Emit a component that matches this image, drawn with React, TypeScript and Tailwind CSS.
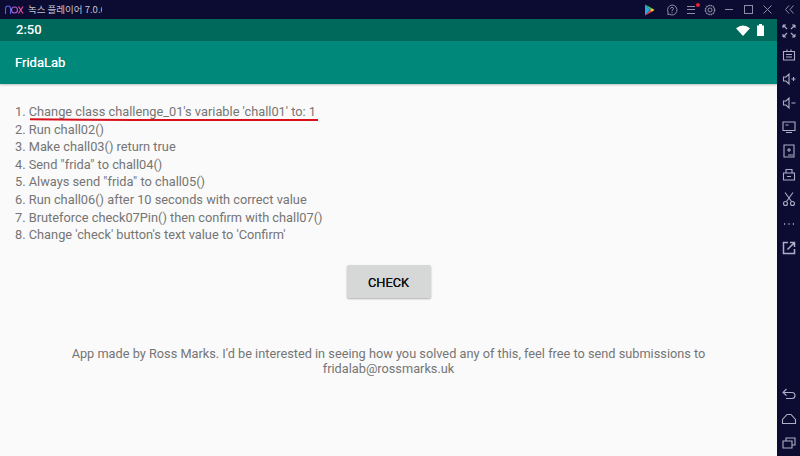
import React from "react";

const Side = ({ children, className = "" }: { children: React.ReactNode; className?: string }) => (
  <svg width="16" height="16" viewBox="0 0 16 16" fill="none" stroke="#adaec6" strokeWidth="1.1" className={className}>
    {children}
  </svg>
);

const lines = [
  "1. Change class challenge_01's variable 'chall01' to: 1",
  "2. Run chall02()",
  "3. Make chall03() return true",
  '4. Send "frida" to chall04()',
  '5. Always send "frida" to chall05()',
  "6. Run chall06() after 10 seconds with correct value",
  "7. Bruteforce check07Pin() then confirm with chall07()",
  "8. Change 'check' button's text value to 'Confirm'",
];

export default function App() {
  return (
    <div className="flex flex-col w-[800px] h-[456px] overflow-hidden bg-[#0c0b31] font-['Roboto',sans-serif]">
      {/* title bar */}
      <div className="flex items-center h-[19px] shrink-0 pl-[5px] bg-[#0c0b31]">
        <svg width="19" height="10" viewBox="0 0 19 10" fill="none" strokeWidth="1.1" className="mr-[4px]">
          <path d="M0.5 9V3.5Q0.5 1 3 1Q5.5 1 5.5 3.5V9" stroke="#5a63e6" />
          <circle cx="9.5" cy="5" r="3" stroke="#b45ad0" />
          <path d="M13.5 1.5L18 8.5M18 1.5L13.5 8.5" stroke="#f050a8" />
        </svg>
        <span className="w-[74px] overflow-hidden whitespace-nowrap text-[9.5px] leading-[19px] text-[#c4c4d2] font-['Noto_Sans_CJK_KR',sans-serif]">
          녹스 플레이어 7.0.6
        </span>
        <div className="flex-1" />
        <svg width="11" height="12" viewBox="0 0 11 12" className="mr-[11px]">
          <path d="M1 0.5L6 6L1 11.5Z" fill="#2aa7e8" />
          <path d="M1 0.5L8 4.2L6 6Z" fill="#35c46a" />
          <path d="M1 11.5L8 7.8L6 6Z" fill="#ea4a4a" />
          <path d="M8 4.2L10.5 6L8 7.8L6 6Z" fill="#f6c634" />
        </svg>
        <svg width="12" height="12" viewBox="0 0 12 12" fill="none" stroke="#8d8ea6" className="mr-[9px]">
          <path d="M6 1a5 5 0 1 1-3 9l-1 1v-3a5 5 0 0 1 4-7Z" />
          <path d="M4.5 4.7Q4.8 3.4 6 3.4Q7.5 3.5 7.5 4.7Q7.5 5.6 6 6.3V7.3M6 8.2V9.2" />
        </svg>
        <div className="relative flex flex-col gap-[2.5px] w-[8px] mr-[9px]">
          <div className="h-px bg-[#8d8ea6]" />
          <div className="h-px bg-[#8d8ea6]" />
          <div className="h-px bg-[#8d8ea6]" />
          <div className="absolute -top-[3px] -right-[5px] w-[4px] h-[4px] rounded-full bg-[#e8222e]" />
        </div>
        <svg width="12" height="12" viewBox="0 0 12 12" fill="none" stroke="#8d8ea6" className="mr-[9px]">
          <circle cx="6" cy="6" r="4.6" strokeWidth="1.4" strokeDasharray="1.8 0.6" />
          <circle cx="6" cy="6" r="2" />
        </svg>
        <div className="w-[8px] h-px bg-[#8d8ea6] mr-[11px]" />
        <div className="w-[9px] h-[9px] border border-[#8d8ea6] mr-[10px]" />
        <svg width="9" height="9" viewBox="0 0 9 9" stroke="#8d8ea6" className="mr-[13px]">
          <path d="M0.5 0.5L8.5 8.5M8.5 0.5L0.5 8.5" />
        </svg>
        <svg width="9" height="9" viewBox="0 0 9 9" fill="none" stroke="#8d8ea6" className="mr-[6px]">
          <path d="M4 0.5L0.5 4.5L4 8.5M8.5 0.5L5 4.5L8.5 8.5" />
        </svg>
      </div>

      <div className="flex flex-1 min-h-0">
        {/* android screen */}
        <div className="relative flex flex-col w-[777px] shrink-0 bg-[#fafafa]">
          <div className="flex items-center justify-between h-[22px] shrink-0 pl-[16px] pr-[13px] bg-[#00695c]">
            <span className="text-[13px] font-medium text-white">2:50</span>
            <div className="flex items-center gap-[7px]">
              <svg width="14" height="11" viewBox="0 0 14 11">
                <path d="M0 3.2Q7 -2 14 3.2L7 11Z" fill="#fff" />
              </svg>
              <svg width="7" height="12" viewBox="0 0 7 12">
                <path d="M2 0H5V1.5H7V12H0V1.5H2Z" fill="#fff" />
              </svg>
            </div>
          </div>
          <div className="flex items-center h-[43px] shrink-0 pl-[15px] bg-[#00897b] shadow-[0_1px_2px_rgba(0,0,0,0.25)]">
            <span className="text-[13px] font-normal text-white [text-shadow:0_0_0.5px_#fff]">FridaLab</span>
          </div>
          <div className="pl-[15px] pt-[19px] text-[12.8px] leading-[17.6px] text-[#757575]">
            {lines.map((l) => (
              <div key={l} className="whitespace-nowrap">{l}</div>
            ))}
          </div>
          <div className="flex justify-center mt-[21px]">
            <div className="flex items-center justify-center w-[84px] h-[33px] pt-[2px] rounded-[2px] bg-[#d6d7d7] shadow-[0_1px_2px_rgba(0,0,0,0.3)] text-[12.8px] font-normal text-[#111] [text-shadow:0_0_0.4px_#111]">
              CHECK
            </div>
          </div>
          <div className="mt-[48px] px-[60px] text-center text-[12.75px] leading-[15.5px] text-[#757575]">
            App made by Ross Marks. I'd be interested in seeing how you solved any of this, feel free to send submissions to fridalab@rossmarks.uk
          </div>
          {/* red annotation */}
          <svg width="292" height="5" viewBox="0 0 292 5" fill="none" className="absolute left-[28px] top-[98px]">
            <path d="M2 2.2Q140 3.4 290 3" stroke="#d8101c" strokeWidth="2" />
          </svg>
        </div>

        {/* right sidebar */}
        <div className="flex flex-col items-center flex-1 pt-[4px]">
          <Side>
            <path d="M2 2L6 6M14 2L10 6M2 14L6 10M14 14L10 10M2 2h3M2 2v3M14 2h-3M14 2v3M2 14h3M2 14v-3M14 14h-3M14 14v-3" />
          </Side>
          <Side className="mt-[8px]">
            <path d="M2.5 4.5H13.5V13H2.5ZM6 4.5V2.5M10 4.5V2.5M5 7.5h6M5 10h6" />
          </Side>
          <Side className="mt-[8px]">
            <path d="M2.5 6H5L8 3V13L5 10H2.5ZM10.5 8h4M12.5 6v4" />
          </Side>
          <Side className="mt-[8px]">
            <path d="M2.5 6H5L8 3V13L5 10H2.5ZM10.5 8h4" />
          </Side>
          <Side className="mt-[8px]">
            <path d="M2 3H14V11.5H2ZM5 13.5H11M4.5 6h3" />
          </Side>
          <Side className="mt-[8px]">
            <path d="M3 2H13V14H3ZM8 5V9M6 7H10M7 12H12" />
          </Side>
          <Side className="mt-[8px]">
            <path d="M5 2.5H11V6H5ZM2.5 6H13.5V13H2.5ZM6 9.5H10" />
          </Side>
          <Side className="mt-[8px]">
            <path d="M4 1.5L10.5 10.5M12 1.5L5.5 10.5" />
            <circle cx="4.5" cy="12.5" r="2" />
            <circle cx="11.5" cy="12.5" r="2" />
          </Side>
          <Side className="mt-[9px]">
            <path d="M3 8h1.2M7.4 8h1.2M11.8 8h1.2" strokeWidth="1.6" />
          </Side>
          <Side className="mt-[8px]">
            <path d="M7 2.5H2.5V13.5H13.5V9M9 2.5H13.5V7M13.5 2.5L6.5 9.5" strokeWidth="1.5" />
          </Side>
          <div className="flex-1" />
          <Side className="mb-[8px]">
            <path d="M5.5 2L2 5.5L5.5 8.5M2 5.5H11Q14 5.5 14 8.5Q14 11.5 11 11.5H5" />
          </Side>
          <Side className="mb-[8px]">
            <path d="M1.5 12.5V8.5L6 3.5H10L14.5 8.5V12.5Z" />
          </Side>
          <Side className="mb-[5px]">
            <path d="M2 6H11V13H2ZM5 6V3H14V10H11" />
          </Side>
        </div>
      </div>
    </div>
  );
}
